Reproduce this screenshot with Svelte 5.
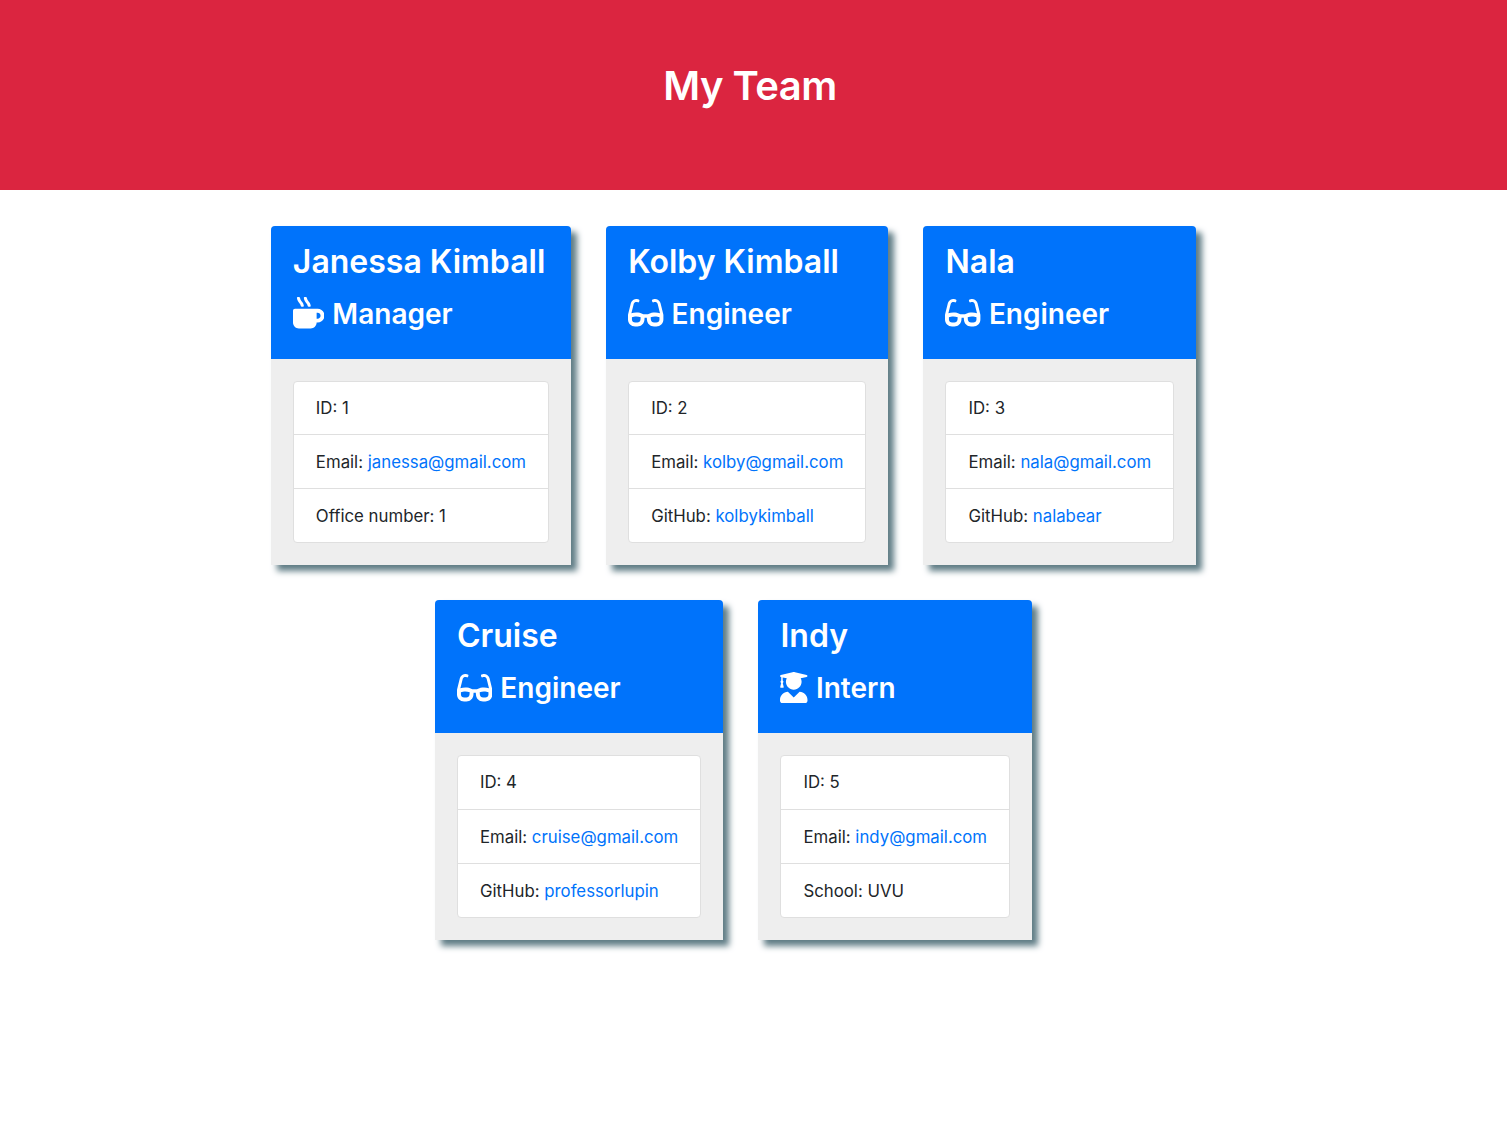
<script>
  const icons = {
    Manager: { vb: '0 0 512 512', w: 31.5, d: 'M127.1 146.5c1.3 7.7 8 13.5 16 13.5h16.5c9.8 0 17.6-8.5 16.3-18-3.8-28.2-16.4-54.2-36.6-74.7-14.4-14.7-23.6-33.3-26.4-53.5C111.8 5.9 105 0 96.8 0H80.4C70.6 0 63 8.5 64.1 18c3.9 31.9 18 61.3 40.6 84.4 12 12.2 19.7 27.5 22.4 44.1zm112 0c1.3 7.7 8 13.5 16 13.5h16.5c9.8 0 17.6-8.5 16.3-18-3.8-28.2-16.4-54.2-36.6-74.7-14.4-14.7-23.6-33.3-26.4-53.5C223.8 5.9 217 0 208.8 0h-16.4c-9.8 0-17.5 8.5-16.3 18 3.9 31.9 18 61.3 40.6 84.4 12 12.2 19.7 27.5 22.4 44.1zM400 192H32c-17.7 0-32 14.3-32 32v192c0 53 43 96 96 96h192c53 0 96-43 96-96h16c61.8 0 112-50.2 112-112s-50.2-112-112-112zm0 160h-16V256h16c26.5 0 48 21.5 48 48s-21.5 48-48 48z' },
    Engineer: { vb: '0 0 576 512', w: 35.4, d: 'M574.1 280.37L528.75 98.66c-5.91-23.7-21.59-44.05-43-55.81-21.44-11.73-46.97-14.11-70.19-6.33l-15.25 5.08c-8.39 2.79-12.92 11.86-10.12 20.24l5.06 15.18c2.79 8.38 11.85 12.91 20.23 10.12l13.18-4.39c10.87-3.62 23-3.57 33.16 1.73 10.29 5.37 17.57 14.56 20.37 25.82l38.46 153.82c-22.19-6.81-49.79-12.46-81.2-12.46-34.77 0-73.98 7.02-114.85 26.74h-73.18c-40.87-19.74-80.08-26.75-114.86-26.75-31.42 0-59.02 5.65-81.21 12.46l38.46-153.82c2.79-11.25 10.09-20.45 20.38-25.81 10.16-5.3 22.28-5.35 33.15-1.73l13.17 4.39c8.38 2.79 17.44-1.74 20.23-10.12l5.06-15.18c2.8-8.38-1.73-17.45-10.12-20.24l-15.25-5.08c-23.22-7.78-48.75-5.41-70.19 6.33-21.41 11.77-37.09 32.11-43 55.8L1.9 280.37A64.218 64.218 0 0 0 0 295.86v70.25C0 429.01 51.58 480 115.2 480h37.12c60.28 0 110.37-45.94 114.88-105.37l2.93-38.63h35.75l2.93 38.63C313.31 434.06 363.4 480 423.68 480h37.12c63.62 0 115.2-50.99 115.2-113.88v-70.25c0-5.23-.64-10.43-1.9-15.5zm-370.72 89.42c-1.97 25.91-24.4 46.21-51.06 46.21H115.2C86.97 416 64 393.62 64 366.11v-37.54c18.12-6.49 43.42-12.57 72.78-12.57 23.86 0 47.26 4.33 69.93 12.92l-3.33 41.87zM512 366.12c0 27.51-22.97 49.88-51.2 49.88h-37.12c-26.67 0-49.1-20.3-51.06-46.21l-3.33-41.86c22.67-8.59 46.08-12.92 69.95-12.92 29.12 0 54.43 6.04 72.76 12.56v38.55z' },
    Intern: { vb: '0 0 448 512', w: 27.5, d: 'M319.4 320.6L224 416l-95.4-95.4C57.1 323.7 0 382.2 0 454.4v9.6c0 26.5 21.5 48 48 48h352c26.5 0 48-21.5 48-48v-9.6c0-72.2-57.1-130.7-128.6-133.8zM13.6 79.8l6.4 1.5v58.4c-7 4.2-12 11.5-12 20.3 0 8.4 4.6 15.4 11.1 19.7L3.5 242c-1.7 6.9 2.1 14 7.6 14h41.8c5.5 0 9.3-7.1 7.6-14l-15.6-62.3C51.4 175.4 56 168.4 56 160c0-8.8-5-16.1-12-20.3V87.1l66 15.9c-8.6 17.2-14 36.4-14 57 0 70.7 57.3 128 128 128s128-57.3 128-128c0-20.6-5.3-39.8-14-57l96.3-23.2c18.2-4.4 18.2-27.1 0-31.5l-190.4-46c-13-3.1-26.7-3.1-39.7 0L13.6 48.2c-18.1 4.4-18.1 27.2 0 31.6z' }
  };
  const team = [
    { name: 'Janessa Kimball', role: 'Manager', id: 1, email: 'janessa@gmail.com', extra: 'Office number: 1' },
    { name: 'Kolby Kimball', role: 'Engineer', id: 2, email: 'kolby@gmail.com', label: 'GitHub: ', link: 'kolbykimball' },
    { name: 'Nala', role: 'Engineer', id: 3, email: 'nala@gmail.com', label: 'GitHub: ', link: 'nalabear' },
    { name: 'Cruise', role: 'Engineer', id: 4, email: 'cruise@gmail.com', label: 'GitHub: ', link: 'professorlupin' },
    { name: 'Indy', role: 'Intern', id: 5, email: 'indy@gmail.com', extra: 'School: UVU' }
  ];
</script>

<header class="banner"><h1>My Team</h1></header>

<main class="team">
  {#each team as m}
    <article class="card">
      <div class="card-head">
        <h2>{m.name}</h2>
        <h3>
          <svg viewBox={icons[m.role].vb} width={icons[m.role].w} height="31.5" aria-hidden="true"><path fill="currentColor" d={icons[m.role].d} /></svg>
          <span>{m.role}</span>
        </h3>
      </div>
      <div class="card-body">
        <ul>
          <li>ID: {m.id}</li>
          <li>Email: <a href="#top">{m.email}</a></li>
          {#if m.link}
            <li>{m.label}<a href="#top">{m.link}</a></li>
          {:else}
            <li>{m.extra}</li>
          {/if}
        </ul>
      </div>
    </article>
  {/each}
</main>

<style>
  :global(body) {
    margin: 0;
    background: #fff;
    color: #212529;
    font-family: Inter, "Liberation Sans", sans-serif;
    font-size: 16px;
    line-height: 1.5;
  }
  .banner {
    box-sizing: border-box;
    height: 190px;
    padding: 62px 7px 0 0;
    background: #db2540;
    color: #fff;
    text-align: center;
  }
  h1 {
    margin: 0;
    font-size: 40px;
    font-weight: 600;
    line-height: 48px;
    letter-spacing: -0.5px;
  }
  .team {
    box-sizing: border-box;
    width: 1140px;
    margin: 36px auto 0;
    padding: 0 40px 60px 0;
    display: flex;
    flex-wrap: wrap;
    justify-content: center;
    gap: 35px 35.15px;
  }
  .card {
    border-radius: 4px 4px 0 0;
    background: #eee;
    box-shadow: 6px 6px 6px #5f7c85;
  }
  .card-head {
    box-sizing: border-box;
    height: 133px;
    padding: 16px 22px 0;
    border-radius: 4px 4px 0 0;
    background: #0073fb;
    color: #fff;
  }
  h2 {
    margin: 0 0 15px;
    font-size: 32px;
    font-weight: 600;
    line-height: 40px;
    white-space: nowrap;
  }
  h3 {
    display: flex;
    align-items: center;
    gap: 8px;
    margin: 0;
    font-size: 28px;
    font-weight: 600;
    line-height: 34px;
    white-space: nowrap;
  }
  h3 svg {
    margin-top: -2px;
  }
  .card-body {
    padding: 22px;
  }
  ul {
    margin: 0;
    padding: 0;
    list-style: none;
    background: #fff;
    border: 1px solid #dfdfdf;
    border-radius: 4px;
  }
  li {
    box-sizing: border-box;
    height: 54px;
    padding: 15px 22px 0;
    white-space: nowrap;
    font-size: 16.8px;
    line-height: 24px;
  }
  li:first-child {
    height: 52.4px;
    padding-top: 14px;
  }
  li + li {
    border-top: 1px solid #dfdfdf;
  }
  a {
    color: #0073fb;
    text-decoration: none;
  }
</style>
